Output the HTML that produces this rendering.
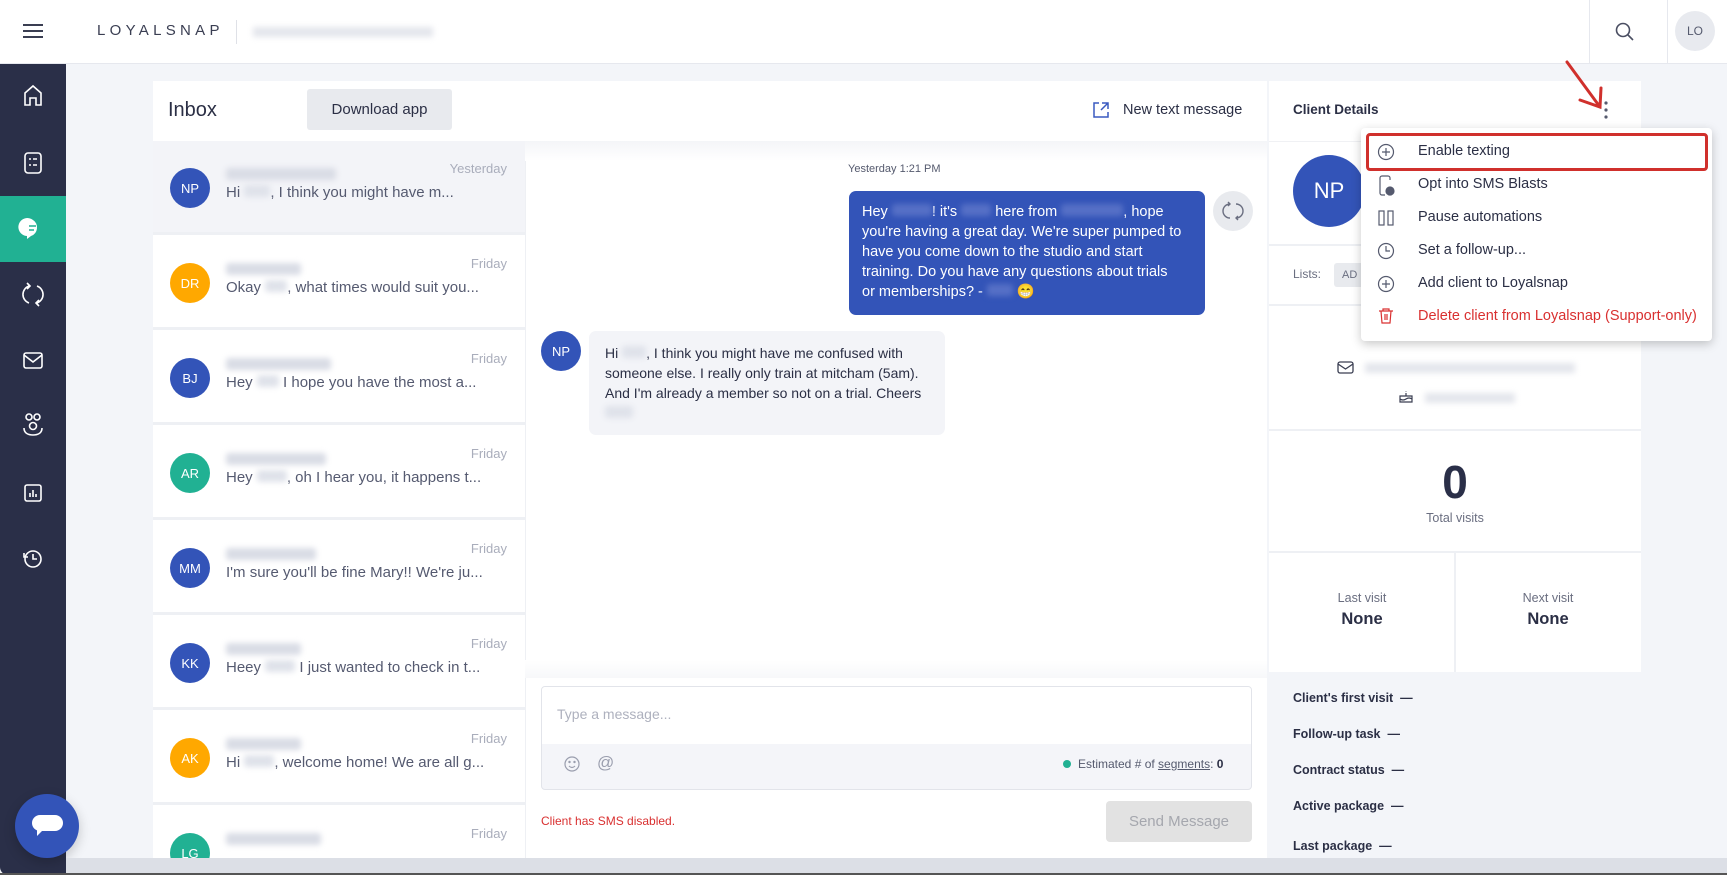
<!DOCTYPE html>
<html><head><meta charset="utf-8"><style>
*{box-sizing:border-box;margin:0;padding:0}
body{width:1727px;height:875px;overflow:hidden;background:#f3f5f9;font-family:"Liberation Sans",sans-serif;position:relative;color:#2b2f45}
.a{position:absolute}
.blur{filter:blur(3px);color:#b8bccb;background:#dfe2ea;border-radius:3px;display:inline-block;height:12px}
.av{position:absolute;border-radius:50%;color:#fff;display:flex;align-items:center;justify-content:center;font-size:13px}
.item{position:absolute;left:153px;width:372px;height:94px;background:#fff;border-bottom:3px solid #eef0f4}
.item .nm{position:absolute;left:73px;top:27px;width:110px;height:12px;background:#d9dce5;filter:blur(3px);border-radius:3px}
.item .tm{position:absolute;right:18px;top:20px;font-size:13px;color:#a9adbb}
.item .pv{position:absolute;left:73px;top:43px;font-size:15px;color:#555a70;white-space:nowrap}
.mi{position:absolute;left:1418px;font-size:14.5px;color:#2b2f45}
.cl{position:absolute;left:1293px;font-size:12.5px;font-weight:bold;color:#2b2f45}
</style></head><body>
<!-- header -->
<div class="a" style="left:0;top:0;width:1727px;height:64px;background:#fff;border-bottom:1px solid #e6e8ee"></div>
<svg class="a" style="left:22px;top:22px" width="22" height="18"><path d="M1 3H21M1 9H21M1 15H21" stroke="#3a3e52" stroke-width="2"/></svg>
<div class="a" style="left:97px;top:22px;font-size:15px;letter-spacing:4.3px;color:#3a3e52">LOYALSNAP</div>
<div class="a" style="left:236px;top:20px;width:1px;height:24px;background:#dfe1e7"></div>
<div class="a" style="left:253px;top:27px;width:180px;height:10px;background:#e4e6ec;filter:blur(3px)"></div>
<div class="a" style="left:1589px;top:0;width:1px;height:64px;background:#e6e8ee"></div>
<div class="a" style="left:1667px;top:0;width:1px;height:64px;background:#e6e8ee"></div>
<svg class="a" style="left:1614px;top:21px" width="22" height="22"><circle cx="9" cy="9" r="6.5" fill="none" stroke="#4a4e62" stroke-width="1.6"/><path d="M14 14L19 19" stroke="#4a4e62" stroke-width="1.6"/></svg>
<div class="av" style="left:1675px;top:11px;width:40px;height:40px;background:#e8eaef;color:#555a6e;font-size:12px">LO</div>
<!-- sidebar -->
<div class="a" style="left:0;top:64px;width:66px;height:811px;background:#2a2f48;border-bottom-left-radius:8px"></div>
<div class="a" style="left:0;top:196px;width:66px;height:66px;background:#21b193"></div>
<svg class="a" style="left:0;top:64px" width="66" height="520" fill="none" stroke="#fff" stroke-width="1.6">
<path d="M25 41V29L33 22L41 29V41H36V34H30V41Z"/>
<rect x="25" y="89" width="16" height="20" rx="3"/><path d="M29 95h2M33 95h4M29 101h2M33 101h4"/>
<path d="M33 156a9 9 0 1 0-6 16l0 3 4-3a9 9 0 0 0 2-16z" fill="#fff" stroke="none"/><path d="M29 162h7M29 166h5" stroke="#21b193"/>
<path d="M29 222a9 9 0 0 0 0 17M37 222a9 9 0 0 1 0 17"/><path d="M27 219l3 3-3 3M39 236l-3 3 3 3" />
<rect x="24" y="289" width="18" height="15" rx="2"/><path d="M24 291l9 7 9-7"/>
<circle cx="29" cy="353" r="3"/><circle cx="37" cy="353" r="3"/><circle cx="33" cy="362" r="3.5"/><path d="M24 364c0 5 4 7 9 7s9-2 9-7"/>
<rect x="25" y="421" width="16" height="16" rx="2"/><path d="M30 433v-4M33 433v-7M36 433v-3"/>
<circle cx="33" cy="495" r="8"/><path d="M33 490v5h4M24 489v4h4"/>
</svg>
<div class="a" style="left:15px;top:794px;width:64px;height:64px;border-radius:50%;background:#3354b8;box-shadow:0 4px 12px rgba(0,0,0,.2)"></div>
<div class="a" style="left:32px;top:815px;width:31px;height:16px;border-radius:8px;background:#fff"></div>
<svg class="a" style="left:37px;top:829px" width="8" height="8"><path d="M0 0H7L0 7Z" fill="#fff"/></svg>
<!-- bottom strip -->
<div class="a" style="left:66px;top:858px;width:1661px;height:17px;background:#dcdfe6"></div>
<div class="a" style="left:0;top:873px;width:1727px;height:2px;background:#555"></div>
<!-- inbox header -->
<div class="a" style="left:153px;top:81px;width:1114px;height:60px;background:#fff"></div>
<div class="a" style="left:168px;top:99px;font-size:20px;font-weight:500">Inbox</div>
<div class="a" style="left:307px;top:89px;width:145px;height:41px;background:#e8eaee;border-radius:3px;font-size:15px;display:flex;align-items:center;justify-content:center">Download app</div>
<svg class="a" style="left:1091px;top:100px" width="20" height="20" fill="none" stroke="#3a5ac0" stroke-width="1.5"><path d="M8 3H3V17H17V12M11 3H17V9M17 3L10 10"/></svg>
<div class="a" style="left:1123px;top:102px;font-size:14.5px;font-weight:500">New text message</div>
<!-- list -->
<div class="a" style="left:153px;top:141px;width:372px;height:717px;background:#fff"></div>
<div class="item" style="top:141px;background:#f3f4f8"><div class="av" style="left:17px;top:27px;width:40px;height:40px;background:#3354b8">NP</div><div class="nm"></div><div class="tm">Yesterday</div><div class="pv">Hi <span class="blur" style="width:26px"></span>, I think you might have m...</div></div>
<div class="item" style="top:236px"><div class="av" style="left:17px;top:27px;width:40px;height:40px;background:#ffa800">DR</div><div class="nm" style="width:75px"></div><div class="tm">Friday</div><div class="pv">Okay <span class="blur" style="width:22px"></span>, what times would suit you...</div></div>
<div class="item" style="top:331px"><div class="av" style="left:17px;top:27px;width:40px;height:40px;background:#3354b8">BJ</div><div class="nm" style="width:105px"></div><div class="tm">Friday</div><div class="pv">Hey <span class="blur" style="width:22px"></span> I hope you have the most a...</div></div>
<div class="item" style="top:426px"><div class="av" style="left:17px;top:27px;width:40px;height:40px;background:#21b193">AR</div><div class="nm" style="width:100px"></div><div class="tm">Friday</div><div class="pv">Hey <span class="blur" style="width:30px"></span>, oh I hear you, it happens t...</div></div>
<div class="item" style="top:521px"><div class="av" style="left:17px;top:27px;width:40px;height:40px;background:#3354b8">MM</div><div class="nm" style="width:90px"></div><div class="tm">Friday</div><div class="pv">I'm sure you'll be fine Mary!! We're ju...</div></div>
<div class="item" style="top:616px"><div class="av" style="left:17px;top:27px;width:40px;height:40px;background:#3354b8">KK</div><div class="nm" style="width:75px"></div><div class="tm">Friday</div><div class="pv">Heey <span class="blur" style="width:30px"></span> I just wanted to check in t...</div></div>
<div class="item" style="top:711px"><div class="av" style="left:17px;top:27px;width:40px;height:40px;background:#ffa800">AK</div><div class="nm" style="width:75px"></div><div class="tm">Friday</div><div class="pv">Hi <span class="blur" style="width:30px"></span>, welcome home! We are all g...</div></div>
<div class="item" style="top:806px;height:52px;border:none;overflow:hidden"><div class="av" style="left:17px;top:27px;width:40px;height:40px;background:#21b193">LG</div><div class="nm" style="width:95px"></div><div class="tm">Friday</div></div>
<!-- chat -->
<div class="a" style="left:525px;top:141px;width:742px;height:717px;background:#fff;border-left:1px solid #eef0f4"></div>
<div class="a" style="left:525px;top:141px;width:742px;height:20px;background:linear-gradient(#f4f5f8,#fff)"></div>
<div class="a" style="left:848px;top:163px;font-size:11px;color:#555a6e">Yesterday 1:21 PM</div>
<div class="a" style="left:849px;top:191px;width:356px;height:124px;background:#3354b8;border-radius:7px;color:#fff;font-size:14.5px;line-height:20px;padding:11px 22px 11px 13px">Hey <span class="blur" style="width:40px;background:#5670c6"></span>! it's <span class="blur" style="width:30px;background:#5670c6"></span> here from <span class="blur" style="width:62px;background:#5670c6"></span>, hope you're having a great day. We're super pumped to have you come down to the studio and start training. Do you have any questions about trials or memberships? - <span class="blur" style="width:26px;background:#5670c6"></span> 😁</div>
<div class="a" style="left:1213px;top:191px;width:40px;height:40px;border-radius:50%;background:#e8eaee"></div>
<svg class="a" style="left:1221px;top:199px" width="24" height="24" fill="none" stroke="#6a6e80" stroke-width="1.4"><path d="M9 5a7 7 0 0 0 0 14M15 5a7 7 0 0 1 0 14M7 3l2 2-2 2M17 17l-2 2 2 2"/></svg>
<div class="av" style="left:541px;top:331px;width:40px;height:40px;background:#3354b8">NP</div>
<div class="a" style="left:589px;top:331px;width:356px;height:104px;background:#f3f4f8;border-radius:7px;font-size:14px;line-height:20px;padding:12px 12px 12px 16px;color:#2b2f45">Hi <span class="blur" style="width:24px"></span>, I think you might have me confused with someone else. I really only train at mitcham (5am). And I'm already a member so not on a trial. Cheers <span class="blur" style="width:28px"></span></div>
<div class="a" style="left:525px;top:660px;width:742px;height:18px;background:linear-gradient(#fff,#f7f8fa)"></div>
<div class="a" style="left:541px;top:686px;width:711px;height:104px;border:1px solid #e2e4ea;border-radius:4px;background:#f4f5f9;overflow:hidden">
<div style="height:57px;background:#fff;padding:19px 15px;font-size:14px;color:#aeb1be">Type a message...</div></div>
<svg class="a" style="left:563px;top:754px" width="20" height="20" fill="none" stroke="#9a9eae" stroke-width="1.2"><circle cx="9" cy="10" r="7"/><circle cx="6.5" cy="8" r=".6"/><circle cx="11.5" cy="8" r=".6"/><path d="M6 12q3 3 6 0"/></svg>
<div class="a" style="left:597px;top:753px;font-size:17px;color:#9a9eae">@</div>
<div class="a" style="left:1063px;top:760px;width:8px;height:8px;border-radius:50%;background:#21b193"></div>
<div class="a" style="left:1078px;top:757px;font-size:12px;color:#555a6e">Estimated # of <u>segments</u>: <b style="color:#2b2f45">0</b></div>
<div class="a" style="left:541px;top:814px;font-size:12px;color:#d93030">Client has SMS disabled.</div>
<div class="a" style="left:1106px;top:801px;width:146px;height:41px;background:#e2e2e2;border-radius:4px;color:#a5a7ae;font-size:15px;display:flex;align-items:center;justify-content:center">Send Message</div>
<!-- client details -->
<div class="a" style="left:1269px;top:81px;width:372px;height:777px;background:#fff"></div>
<div class="a" style="left:1293px;top:102px;font-size:13.5px;font-weight:bold">Client Details</div>
<svg class="a" style="left:1602px;top:100px" width="8" height="20" fill="#555a6e"><circle cx="4" cy="3" r="1.6"/><circle cx="4" cy="10" r="1.6"/><circle cx="4" cy="17" r="1.6"/></svg>
<div class="a" style="left:1269px;top:141px;width:372px;height:1px;background:#f0f1f4"></div>
<div class="av" style="left:1293px;top:155px;width:72px;height:72px;background:#3354b8;font-size:22px">NP</div>
<div class="a" style="left:1269px;top:244px;width:372px;height:2px;background:#eef0f4"></div>
<div class="a" style="left:1293px;top:267px;font-size:12px;color:#6a6e80">Lists:</div>
<div class="a" style="left:1334px;top:263px;width:40px;height:24px;background:#e8eaee;border-radius:3px;font-size:11px;color:#6a6e80;padding:6px 8px">AD</div>
<div class="a" style="left:1269px;top:304px;width:372px;height:2px;background:#eef0f4"></div>
<svg class="a" style="left:1337px;top:360px" width="18" height="16" fill="none" stroke="#3a3e52" stroke-width="1.3"><rect x="1" y="2" width="15" height="11" rx="2"/><path d="M1 4l7.5 5 7.5-5"/></svg>
<div class="a" style="left:1365px;top:363px;width:210px;height:10px;background:#e4e6ec;filter:blur(3px)"></div>
<svg class="a" style="left:1398px;top:388px" width="16" height="16" fill="none" stroke="#3a3e52" stroke-width="1.2"><path d="M2 8h12v6H2zM2 11q3 2 6 0t6 0M8 8V5M8 3v0.5"/></svg>
<div class="a" style="left:1425px;top:393px;width:90px;height:10px;background:#e4e6ec;filter:blur(3px)"></div>
<div class="a" style="left:1269px;top:429px;width:372px;height:2px;background:#eef0f4"></div>
<div class="a" style="left:1269px;top:455px;width:372px;text-align:center;font-size:46px;font-weight:bold;color:#2a2f48">0</div>
<div class="a" style="left:1269px;top:511px;width:372px;text-align:center;font-size:12.5px;color:#6a6e80">Total visits</div>
<div class="a" style="left:1269px;top:551px;width:372px;height:2px;background:#eef0f4"></div>
<div class="a" style="left:1454px;top:553px;width:2px;height:119px;background:#eef0f4"></div>
<div class="a" style="left:1269px;top:591px;width:186px;text-align:center;font-size:12.5px;color:#6a6e80">Last visit</div>
<div class="a" style="left:1269px;top:610px;width:186px;text-align:center;font-size:16.5px;font-weight:bold">None</div>
<div class="a" style="left:1455px;top:591px;width:186px;text-align:center;font-size:12.5px;color:#6a6e80">Next visit</div>
<div class="a" style="left:1455px;top:610px;width:186px;text-align:center;font-size:16.5px;font-weight:bold">None</div>
<div class="a" style="left:1269px;top:672px;width:372px;height:186px;background:#f3f5f9"></div>
<div class="cl" style="top:691px">Client's first visit &nbsp;—</div>
<div class="cl" style="top:727px">Follow-up task &nbsp;—</div>
<div class="cl" style="top:763px">Contract status &nbsp;—</div>
<div class="cl" style="top:799px">Active package &nbsp;—</div>
<div class="cl" style="top:839px">Last package &nbsp;—</div>
<!-- menu -->
<div class="a" style="left:1361px;top:128px;width:351px;height:213px;background:#fff;border-radius:4px;box-shadow:0 3px 10px rgba(0,0,0,.22)"></div>
<div class="a" style="left:1366px;top:133px;width:342px;height:38px;border:3px solid #d0302c;border-radius:4px"></div>
<svg class="a" style="left:1376px;top:142px" width="20" height="190" fill="none" stroke="#555a6e" stroke-width="1.2">
<circle cx="10" cy="10" r="7.5"/><path d="M10 6v8M6 10h8"/>
<path d="M14 38V36a2 2 0 0 0-2-2H6a2 2 0 0 0-2 2V51a2 2 0 0 0 2 2h3"/><circle cx="14" cy="49" r="4" fill="#555a6e"/>
<rect x="3" y="69" width="5" height="14"/><rect x="12" y="69" width="5" height="14"/>
<circle cx="10" cy="109" r="7.5"/><path d="M10 104v5h4"/>
<circle cx="10" cy="142" r="7.5"/><path d="M10 138v8M6 142h8"/>
<path d="M3 169h14M7 169v-2h6v2M5 169l1 12h8l1-12M9 172v6M11 172v6" stroke="#d93030"/>
</svg>
<div class="mi" style="top:143px">Enable texting</div>
<div class="mi" style="top:176px">Opt into SMS Blasts</div>
<div class="mi" style="top:209px">Pause automations</div>
<div class="mi" style="top:242px">Set a follow-up...</div>
<div class="mi" style="top:275px">Add client to Loyalsnap</div>
<div class="mi" style="top:308px;color:#d93030">Delete client from Loyalsnap (Support-only)</div>
<svg class="a" style="left:1560px;top:55px" width="50" height="60" fill="none" stroke="#d0302c" stroke-width="3" stroke-linecap="round"><path d="M7 7L40 52M20 45L40 52L41 33"/></svg>
</body></html>
